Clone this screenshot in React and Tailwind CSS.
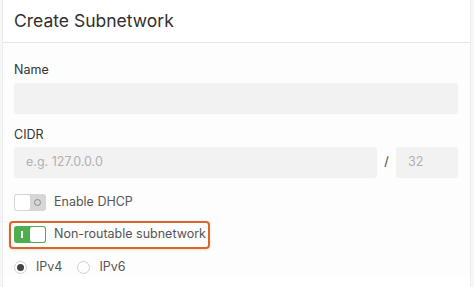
import React, { useState } from 'react';

const Toggle = ({ on }) => (
  <div
    className={`relative flex h-[17px] w-[32px] shrink-0 items-center rounded-[3px] ${
      on ? 'bg-[#4cae4c]' : 'bg-[#d6d6d6]'
    }`}
  >
    {on ? (
      <>
        <span className="ml-[7px] h-[7px] w-[1.5px] bg-white" />
        <span className="absolute right-[1px] top-[1px] h-[15px] w-[15px] rounded-[2px] bg-white" />
      </>
    ) : (
      <>
        <span className="absolute left-[1px] top-[1px] h-[15px] w-[15px] rounded-[2px] bg-white" />
        <span className="ml-auto mr-[5px] h-[7px] w-[7px] rounded-full border border-[#8a8a8a]" />
      </>
    )}
  </div>
);

const Radio = ({ checked, label }) => (
  <label className="flex items-center gap-[9px]">
    <span className="flex h-[13px] w-[13px] items-center justify-center rounded-full border border-[#cfcfcf] bg-white">
      {checked && <span className="h-[7px] w-[7px] rounded-full bg-[#444]" />}
    </span>
    <span className="whitespace-nowrap text-[12.5px] text-[#555]">{label}</span>
  </label>
);

const Field = ({ width, value, onChange, placeholder }) => (
  <div className={`flex h-[31px] shrink-0 items-center rounded-[3px] bg-[#f3f2f3] pl-[12px] pr-[8px] ${width}`}>
    <input
      value={value}
      onChange={(e) => onChange(e.target.value)}
      placeholder={placeholder}
      className="w-full bg-transparent text-[12.5px] text-[#333] outline-none placeholder:text-[#b0b0b0]"
    />
  </div>
);

export default function App() {
  const [name, setName] = useState('');
  const [cidr, setCidr] = useState('');
  const [prefix, setPrefix] = useState('');

  return (
    <div
      className="h-[287px] w-[474px] overflow-hidden bg-[#f7f7f7] pl-[2px] pr-[3px]"
      style={{ fontFamily: 'Inter, "Liberation Sans", sans-serif' }}
    >
      <div className="h-full border-x border-[#ececec] bg-white">
        {/* Header */}
        <div className="flex h-[43px] items-center border-b border-[#e6e6e6] px-[11px]">
          <h2 className="text-[17.5px] font-normal text-[#2f2f2f]">Create Subnetwork</h2>
        </div>

        {/* Body */}
        <div className="bg-[#fdfdfd] px-[11px] pt-[19px]">
          <label className="block text-[12.5px] leading-[15px] text-[#333]">Name</label>
          <div className="mt-[6px]">
            <Field width="w-[444px]" value={name} onChange={setName} />
          </div>

          <label className="mt-[13px] block text-[12.5px] leading-[15px] text-[#333]">CIDR</label>
          <div className="mt-[5px] flex items-center">
            <Field width="w-[363px]" value={cidr} onChange={setCidr} placeholder="e.g. 127.0.0.0" />
            <span className="w-[19px] text-center text-[12.5px] text-[#444]">/</span>
            <Field width="w-[62px]" value={prefix} onChange={setPrefix} placeholder="32" />
          </div>

          <div className="mt-[15px] flex items-center gap-[8px]">
            <Toggle on={false} />
            <span className="whitespace-nowrap text-[12.5px] text-[#555]">Enable DHCP</span>
          </div>

          <div className="ml-[-5px] mt-[9px] flex h-[28px] w-[201px] items-center gap-[8px] rounded-[4px] border-2 border-[#e0632a] pl-[3px] shadow-[0_1px_3px_rgba(0,0,0,0.12)]">
            <Toggle on />
            <span className="whitespace-nowrap text-[12.5px] text-[#555]">Non-routable subnetwork</span>
          </div>

          <div className="mt-[9px] flex items-center gap-[15px]">
            <Radio checked label="IPv4" />
            <Radio label="IPv6" />
          </div>
        </div>
      </div>
    </div>
  );
}
